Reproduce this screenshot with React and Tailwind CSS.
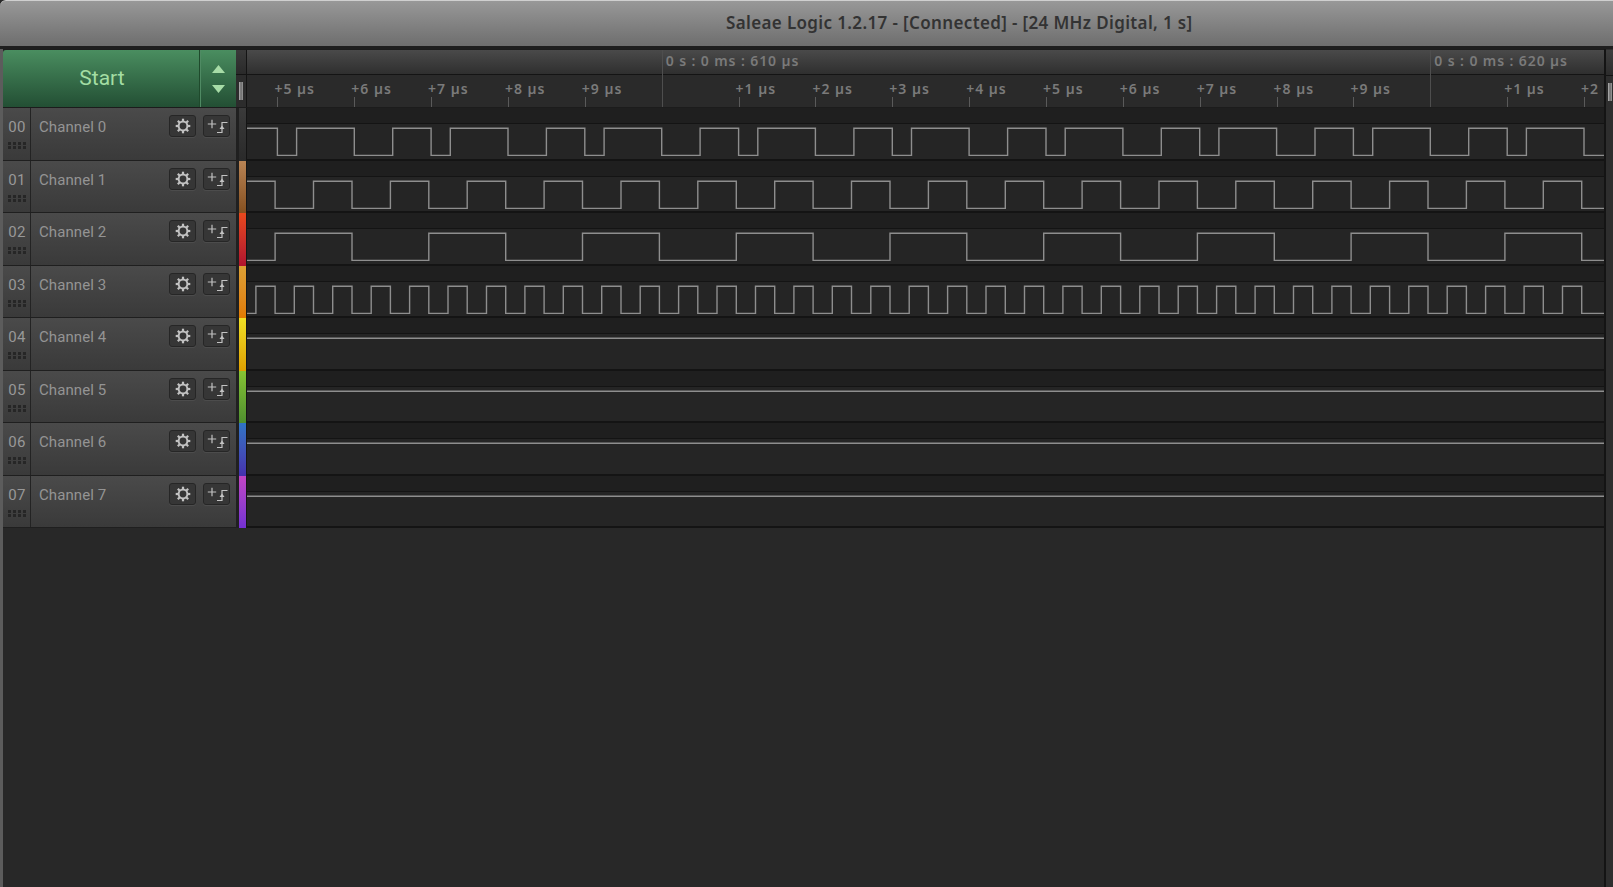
import React from 'react'

const channels = [
  { name: 'Channel 0', color: 'bg-gradient-to-b from-[#3a3a3a] to-[#2a2a2a]' },
  { name: 'Channel 1', color: 'bg-gradient-to-b from-[#b98454] to-[#85501f]' },
  { name: 'Channel 2', color: 'bg-gradient-to-b from-[#e8481c] to-[#b0122e]' },
  { name: 'Channel 3', color: 'bg-gradient-to-b from-[#dca034] to-[#e07a00]' },
  { name: 'Channel 4', color: 'bg-gradient-to-b from-[#efe024] to-[#dfa000]' },
  { name: 'Channel 5', color: 'bg-gradient-to-b from-[#86c433] to-[#4f8f2f]' },
  { name: 'Channel 6', color: 'bg-gradient-to-b from-[#2f74c4] to-[#4530ae]' },
  { name: 'Channel 7', color: 'bg-gradient-to-b from-[#c244c4] to-[#7430d2]' },
]

// time axis: 1 us = 76.86px, the 610 us mark sits at x=414.7 inside the plot
const PLOT_W = 1357
const toX = (t) => 414.7 + 76.86 * t

const range = (a, b) => Array.from({ length: b - a + 1 }, (_, i) => a + i)

const waves = [
  { high: true, edges: range(-5, 12).flatMap((k) => [k, k + (k % 2 === 0 ? 0.5 : 0.25)]) },
  { high: true, edges: range(-5, 12).flatMap((k) => [k - 0.03, k + 0.47]) },
  { high: false, edges: range(-5, 12).map((k) => k - 0.03) },
  { high: false, edges: range(-10, 24).flatMap((n) => [n * 0.5 - 0.28, n * 0.5 - 0.03]) },
  { high: true, edges: [] },
  { high: true, edges: [] },
  { high: true, edges: [] },
  { high: true, edges: [] },
]

const HIGH_Y = 4.2
const LOW_Y = 31.4

const wavePath = ({ high, edges }) => {
  let level = high
  let d = `M0 ${level ? HIGH_Y : LOW_Y}`
  edges.forEach((t) => {
    const x = toX(t).toFixed(1)
    if (x < 0 || x > PLOT_W) {
      return
    }
    d += ` H${x}`
    level = !level
    d += ` V${level ? HIGH_Y : LOW_Y}`
  })
  return d + ` H${PLOT_W}`
}

const minorTicks = [-5, -4, -3, -2, -1, 1, 2, 3, 4, 5, 6, 7, 8, 9, 11, 12]
const minorLabel = (t) => {
  const n = ((t % 10) + 10) % 10
  return t === 12 ? '+2' : `+${n} µs`
}

const GearIcon = () => (
  <svg width="16" height="16" viewBox="0 0 16 16">
    <circle cx="8" cy="8" r="4.4" fill="none" stroke="#c2c2c2" strokeWidth="2" />
    {[0, 45, 90, 135, 180, 225, 270, 315].map((a) => (
      <rect key={a} x="6.9" y="0.7" width="2.2" height="3" fill="#c2c2c2" transform={`rotate(${a} 8 8)`} />
    ))}
  </svg>
)

const TriggerIcon = () => (
  <svg width="24" height="18" viewBox="0 0 24 18" fill="none" stroke="#c2c2c2" strokeWidth="1.2">
    <path d="M2.8 7H11.2M7 2.8V11.2" />
    <path d="M12 15.5H17V5.5H22.5" />
    <path d="M14.5 12L17 8.5L19.5 12Z" fill="#c2c2c2" stroke="none" />
  </svg>
)

const SmallButton = ({ children }) => (
  <div className="w-[27px] h-[22px] rounded-[3px] bg-[#363636] border border-[#262626] flex items-center justify-center shadow-[0_1px_0_#4c4c4c]">
    {children}
  </div>
)

const Grip = () => (
  <div className="grid grid-cols-4 gap-x-[2px] gap-y-[1px] w-[18px] mt-[6px]">
    {range(1, 8).map((i) => (
      <div key={i} className="w-[3px] h-[3px] bg-[#262626]" />
    ))}
  </div>
)

const ChannelRow = ({ index, channel }) => (
  <div className="flex h-[52.5px]">
    <div className="w-[233px] flex border-b border-[#1f1f1f] bg-gradient-to-b from-[#4a4a4a] to-[#3a3a3a]">
      <div className="w-[28px] flex flex-col items-center pl-[1px] pt-[10px] border-r border-[#232323]">
        <span className="text-[15px] leading-[18px] tracking-[0.2px] text-[#989898]">0{index}</span>
        <Grip />
      </div>
      <span className="ml-[8px] mt-[10px] text-[15px] leading-[18px] tracking-[0.1px] text-[#949494]">{channel.name}</span>
      <div className="ml-auto mr-[6px] mt-[7px] flex gap-[7px]">
        <SmallButton><GearIcon /></SmallButton>
        <SmallButton><TriggerIcon /></SmallButton>
      </div>
    </div>
    <div className="w-[10px] flex bg-[#202020] pl-[3px]">
      <div className={`w-full ${channel.color}`} />
    </div>
    <div className="w-[1358px] flex flex-col border-b-2 border-l border-[#141414] bg-[#252525]">
      <div className="h-[16px] bg-[#1f1f1f] border-b border-[#141414]" />
      <svg width={PLOT_W} height="34" className="block">
        <path d={wavePath(waves[index])} fill="none" stroke="#8e8e8e" strokeWidth="1.4" />
      </svg>
    </div>
  </div>
)

const Timeline = () => (
  <div className="relative w-[1358px] overflow-hidden border-l border-[#141414] flex flex-col font-['Noto_Sans',sans-serif] font-semibold text-[#7a7a7a]">
    <div className="h-[25px] bg-gradient-to-b from-[#4a4a4a] to-[#2f2f2f] border-b border-[#141414]" />
    <div className="flex-1 bg-[#2a2a2a]" />
    {[0, 10].map((t) => (
      <React.Fragment key={t}>
        <div className="absolute top-0 bottom-0 w-px bg-[#4e4e4e]" style={{ left: toX(t) }} />
        <span className="absolute top-[3px] text-[14px] leading-[16px] tracking-[0.9px] whitespace-pre" style={{ left: toX(t) + 4 }}>
          0 s : 0 ms : {610 + t} µs
        </span>
      </React.Fragment>
    ))}
    {minorTicks.map((t) => (
      <React.Fragment key={t}>
        <div className="absolute top-[47px] bottom-0 w-px bg-[#5a5a5a]" style={{ left: toX(t) }} />
        <span className="absolute top-[31px] text-[14px] leading-[16px] tracking-[1px] whitespace-pre" style={{ left: toX(t) - 3 }}>
          {minorLabel(t)}
        </span>
      </React.Fragment>
    ))}
  </div>
)

const Handle = () => (
  <div className="w-[4px] h-[18px] bg-gradient-to-r from-[#b8b8b8] via-[#6a6a6a] to-[#9a9a9a]" />
)

export default function App() {
  return (
    <div className="w-[1613px] h-[887px] overflow-hidden flex flex-col bg-[#282828] font-[Roboto,sans-serif]">
      <div className="h-[46px] pb-[2px] rounded-tl-[6px] border-t border-[#cfcfcf] bg-gradient-to-b from-[#989898] to-[#6e6e6e] flex items-center pl-[726px]">
        <span className="font-['Noto_Sans',sans-serif] font-semibold text-[17px] tracking-[0.36px] text-[#333333] whitespace-pre">
          Saleae Logic 1.2.17 - [Connected] - [24 MHz Digital, 1 s]
        </span>
      </div>
      <div className="h-[3px] bg-[#1e1e1e]" />

      <div className="flex-1 flex min-h-0">
        <div className="w-[3px] bg-[#5c5c5c]" />

        <div className="w-[1601px] flex flex-col">
          <div className="flex h-[59px] border-t border-b border-[#1c1c1c]">
            <div className="w-[233px] flex rounded-tl-[3px] overflow-hidden bg-gradient-to-b from-[#4a8e60] to-[#234f34]">
              <div className="w-[197px] pl-[2px] flex items-center justify-center border-r border-[#1f4a2c] text-[21px] text-[#a3dda3]">
                Start
              </div>
              <div className="flex-1 flex flex-col items-center justify-center gap-[12px] border-l border-[#4f8a63]">
                <svg width="13" height="8" viewBox="0 0 13 8"><path d="M6.5 0L13 8H0Z" fill="#a7dca7" /></svg>
                <svg width="13" height="8" viewBox="0 0 13 8"><path d="M0 0H13L6.5 8Z" fill="#a7dca7" /></svg>
              </div>
            </div>
            <div className="w-[10px] flex flex-col bg-[#2c2c2c]">
              <div className="h-[25px] border-b border-[#141414] bg-gradient-to-b from-[#3a3a3a] to-[#2a2a2a]" />
              <div className="flex-1 flex justify-center pt-[7px]">
                <Handle />
              </div>
            </div>
            <Timeline />
          </div>

          {channels.map((channel, index) => (
            <ChannelRow key={channel.name} index={index} channel={channel} />
          ))}
        </div>

        <div className="w-[9px] flex flex-col items-center border-l-2 border-[#141414] bg-[#2e2e2e]">
          <div className="h-[26px] w-full mt-[1px] border-b border-[#141414] bg-gradient-to-b from-[#3e3e3e] to-[#2c2c2c]" />
          <div className="mt-[7px]">
            <Handle />
          </div>
        </div>
      </div>
    </div>
  )
}
